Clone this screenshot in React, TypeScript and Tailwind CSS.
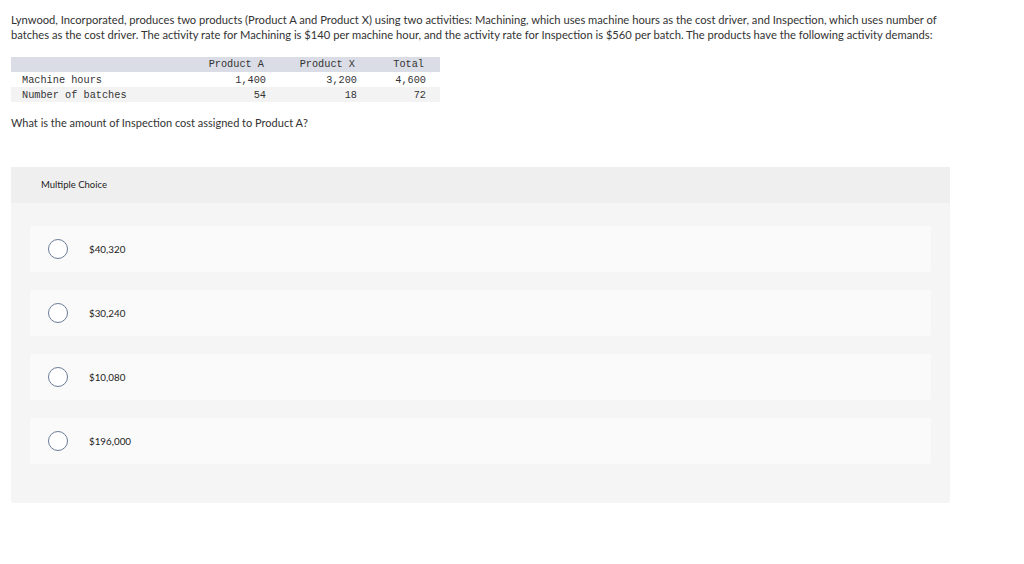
import React from 'react';

const rows = [
  { label: 'Machine hours', a: '1,400', x: '3,200', total: '4,600' },
  { label: 'Number of batches', a: '54', x: '18', total: '72' },
];

const choices = ['$40,320', '$30,240', '$10,080', '$196,000'];

export default function App() {
  return (
    <div className="min-h-[564px] w-[1024px] bg-white px-[11px] pt-[12px] font-['Lato','Open_Sans',sans-serif] text-[#333]">
      <p className="w-[952px] text-[11.2px] leading-[15px]">
        Lynwood, Incorporated, produces two products (Product A and Product X) using two activities: Machining, which uses machine hours as the cost driver, and Inspection, which uses number of batches as the cost driver. The activity rate for Machining is $140 per machine hour, and the activity rate for Inspection is $560 per batch. The products have the following activity demands:
      </p>

      <table className="mt-[15px] border-collapse font-['Liberation_Mono',monospace] text-[10.25px] text-[#333]">
        <thead>
          <tr className="bg-[#dadde5]">
            <th className="h-[15px] w-[178px] leading-[15px]"></th>
            <th className="h-[15px] w-[91px] pr-[16px] text-right font-normal leading-[15px]">Product A</th>
            <th className="h-[15px] w-[91px] pr-[16px] text-right font-normal leading-[15px]">Product X</th>
            <th className="h-[15px] w-[69px] pr-[16px] text-right font-normal leading-[15px]">Total</th>
          </tr>
        </thead>
        <tbody>
          {rows.map((r, i) => (
            <tr key={r.label} className={i % 2 ? 'bg-[#f3f3f3]' : 'bg-white'}>
              <td className="h-[15px] pl-[11px] pt-[1px] text-left leading-[14px]">{r.label}</td>
              <td className="h-[15px] pr-[14px] pt-[1px] text-right leading-[14px]">{r.a}</td>
              <td className="h-[15px] pr-[14px] pt-[1px] text-right leading-[14px]">{r.x}</td>
              <td className="h-[15px] pr-[14px] pt-[1px] text-right leading-[14px]">{r.total}</td>
            </tr>
          ))}
        </tbody>
      </table>

      <p className="mt-[13px] text-[11px] leading-[15px]">What is the amount of Inspection cost assigned to Product A?</p>

      <div className="mt-[37px] w-[939px] rounded-[2px] bg-[#f5f5f5] pb-[39px]">
        <div className="flex h-[36px] items-center bg-[#efefef] px-[30px] text-[9.5px] text-[#222]">Multiple Choice</div>
        <div className="flex flex-col gap-[18px] px-[19px] pt-[23px]">
          {choices.map((c) => (
            <div key={c} className="flex h-[46px] items-center rounded-[2px] bg-[#fafafa] pl-[18px] text-[9.8px] text-[#222]">
              <span className="h-[20px] w-[20px] rounded-full border border-[#6a7b97] bg-white"></span>
              <span className="ml-[21px]">{c}</span>
            </div>
          ))}
        </div>
      </div>
    </div>
  );
}
